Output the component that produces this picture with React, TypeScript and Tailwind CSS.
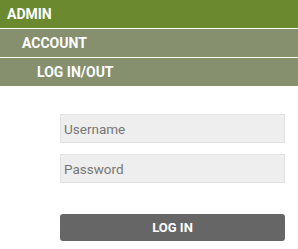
export default function App() {
  return (
    <div className="w-[298px] h-[249px] bg-white" style={{ fontFamily: "Roboto, 'Liberation Sans', sans-serif" }}>
      <div className="h-[28px] bg-[#6b8a30] flex items-center pl-[7px] text-white font-bold text-[14px] border-b border-white box-content">ADMIN</div>
      <div className="h-[28px] bg-[#868f6e] flex items-center pl-[22px] text-white font-bold text-[14px] border-b border-white box-content">ACCOUNT</div>
      <div className="h-[28px] bg-[#868f6e] flex items-center pl-[37px] text-white font-bold text-[14px]">LOG IN/OUT</div>
      <div className="pl-[60px] pt-[28px] flex flex-col">
        <input
          placeholder="Username"
          className="w-[225px] h-[29px] bg-[#eeeeee] border border-[#e2e2e2] px-[3px] text-[13.5px] placeholder:text-[#777] outline-none"
        />
        <input
          placeholder="Password"
          type="password"
          className="mt-[11px] w-[225px] h-[29px] bg-[#eeeeee] border border-[#e2e2e2] px-[3px] text-[13.5px] placeholder:text-[#777] outline-none"
        />
        <button className="mt-[31px] w-[225px] h-[27px] bg-[#666666] rounded-[3px] text-white font-bold text-[13px]">LOG IN</button>
      </div>
    </div>
  );
}
